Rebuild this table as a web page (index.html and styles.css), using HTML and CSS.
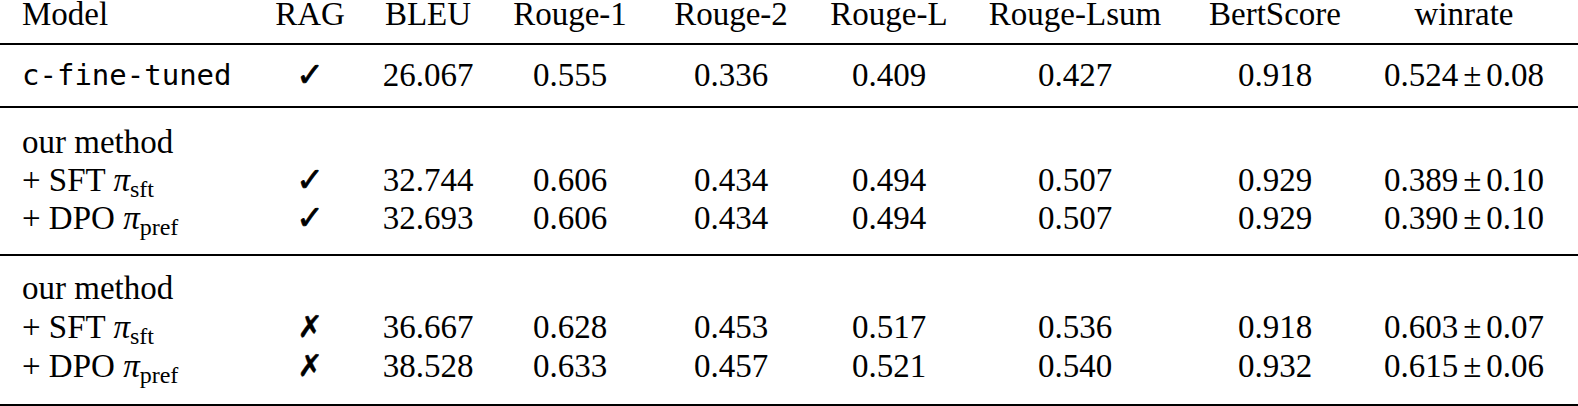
FILE: index.html
```html
<!DOCTYPE html>
<html>
<head>
<meta charset="utf-8">
<link rel="stylesheet" href="styles.css">
</head>
<body>
<table class="results">
  <colgroup>
    <col class="c-model">
    <col class="c-rag">
    <col class="c-bleu">
    <col class="c-r1">
    <col class="c-r2">
    <col class="c-rl">
    <col class="c-rlsum">
    <col class="c-bert">
    <col class="c-win">
  </colgroup>
  <thead>
    <tr class="head">
      <th class="model">Model</th>
      <th>RAG</th>
      <th>BLEU</th>
      <th>Rouge-1</th>
      <th>Rouge-2</th>
      <th>Rouge-L</th>
      <th>Rouge-Lsum</th>
      <th>BertScore</th>
      <th>winrate</th>
    </tr>
  </thead>
  <tbody class="single">
    <tr>
      <td class="model"><span class="mono">c-fine-tuned</span></td>
      <td><span class="mark">✓</span></td>
      <td>26.067</td>
      <td>0.555</td>
      <td>0.336</td>
      <td>0.409</td>
      <td>0.427</td>
      <td>0.918</td>
      <td>0.524<span class="pm">±</span>0.08</td>
    </tr>
  </tbody>
  <tbody class="group">
    <tr class="first">
      <td class="model">our method</td>
      <td></td><td></td><td></td><td></td><td></td><td></td><td></td><td></td>
    </tr>
    <tr>
      <td class="model">+ SFT <i class="pi">π</i><sub>sft</sub></td>
      <td><span class="mark">✓</span></td>
      <td>32.744</td>
      <td>0.606</td>
      <td>0.434</td>
      <td>0.494</td>
      <td>0.507</td>
      <td>0.929</td>
      <td>0.389<span class="pm">±</span>0.10</td>
    </tr>
    <tr class="last">
      <td class="model">+ DPO <i class="pi">π</i><sub>pref</sub></td>
      <td><span class="mark">✓</span></td>
      <td>32.693</td>
      <td>0.606</td>
      <td>0.434</td>
      <td>0.494</td>
      <td>0.507</td>
      <td>0.929</td>
      <td>0.390<span class="pm">±</span>0.10</td>
    </tr>
  </tbody>
  <tbody class="group final">
    <tr class="first">
      <td class="model">our method</td>
      <td></td><td></td><td></td><td></td><td></td><td></td><td></td><td></td>
    </tr>
    <tr>
      <td class="model">+ SFT <i class="pi">π</i><sub>sft</sub></td>
      <td><span class="mark cross">✗</span></td>
      <td>36.667</td>
      <td>0.628</td>
      <td>0.453</td>
      <td>0.517</td>
      <td>0.536</td>
      <td>0.918</td>
      <td>0.603<span class="pm">±</span>0.07</td>
    </tr>
    <tr class="last">
      <td class="model">+ DPO <i class="pi">π</i><sub>pref</sub></td>
      <td><span class="mark cross">✗</span></td>
      <td>38.528</td>
      <td>0.633</td>
      <td>0.457</td>
      <td>0.521</td>
      <td>0.540</td>
      <td>0.932</td>
      <td>0.615<span class="pm">±</span>0.06</td>
    </tr>
  </tbody>
</table>
</body>
</html>
```

FILE: styles.css
```css
html, body {
  margin: 0;
  padding: 0;
  background: #fff;
}

body {
  font-family: "Liberation Serif", "Times New Roman", serif;
  font-size: 33px;
  color: #000;
}

.results {
  width: 1578px;
  border-collapse: collapse;
  table-layout: fixed;
}

.c-model { width: 270px; }
.c-rag { width: 80px; }
.c-bleu { width: 156px; }
.c-r1 { width: 128px; }
.c-r2 { width: 194px; }
.c-rl { width: 122px; }
.c-rlsum { width: 250px; }
.c-bert { width: 150px; }
.c-win { width: 228px; }

.results th,
.results td {
  padding: 0;
  font-weight: normal;
  text-align: center;
  white-space: nowrap;
  line-height: 38px;
}

.results .model {
  text-align: left;
  padding-left: 22px;
}

.head th {
  line-height: 28px;
  padding-bottom: 15px;
  border-bottom: 2px solid #000;
}

.single td {
  padding-top: 10px;
  padding-bottom: 12px;
  border-bottom: 2px solid #000;
}

.group .first td {
  padding-top: 15px;
}

.group .last td {
  padding-bottom: 17px;
  border-bottom: 2px solid #000;
}

.group.final .first td {
  padding-top: 13px;
}

.group.final .last td {
  padding-bottom: 19px;
  border-bottom: 3px solid #000;
}

.mono {
  font-family: "DejaVu Sans Mono", "Liberation Mono", monospace;
  font-size: 29px;
}

.pi {
  font-style: italic;
}

.pm {
  margin: 0 5px;
}

sub {
  font-size: 24px;
  line-height: 0;
  vertical-align: -6px;
}

.mark {
  font-family: "DejaVu Sans", sans-serif;
  font-size: 33px;
  -webkit-text-stroke: 0.8px #000;
}

.mark.cross {
  font-size: 30px;
  -webkit-text-stroke: 0.5px #000;
}
```
